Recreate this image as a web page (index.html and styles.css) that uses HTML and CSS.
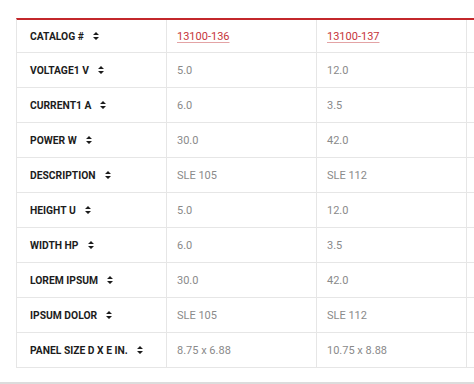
FILE: index.html
```html
<!DOCTYPE html>
<html>
<head>
<meta charset="utf-8">
<link rel="stylesheet" href="styles.css">
</head>
<body>
<div class="page">
  <div class="table">
    <div class="row head">
      <div class="cell label">CATALOG #<svg class="sort" viewBox="0 0 6 8"><path d="M3 0L6 3H0Z M3 8L6 5H0Z"/></svg></div>
      <div class="cell val"><a class="link">13100-136</a></div>
      <div class="cell val"><a class="link">13100-137</a></div>
      <div class="cell"></div>
    </div>
    <div class="row">
      <div class="cell label">VOLTAGE1 V<svg class="sort" viewBox="0 0 6 8"><path d="M3 0L6 3H0Z M3 8L6 5H0Z"/></svg></div>
      <div class="cell val">5.0</div>
      <div class="cell val">12.0</div>
      <div class="cell"></div>
    </div>
    <div class="row">
      <div class="cell label">CURRENT1 A<svg class="sort" viewBox="0 0 6 8"><path d="M3 0L6 3H0Z M3 8L6 5H0Z"/></svg></div>
      <div class="cell val">6.0</div>
      <div class="cell val">3.5</div>
      <div class="cell"></div>
    </div>
    <div class="row">
      <div class="cell label">POWER W<svg class="sort" viewBox="0 0 6 8"><path d="M3 0L6 3H0Z M3 8L6 5H0Z"/></svg></div>
      <div class="cell val">30.0</div>
      <div class="cell val">42.0</div>
      <div class="cell"></div>
    </div>
    <div class="row">
      <div class="cell label">DESCRIPTION<svg class="sort" viewBox="0 0 6 8"><path d="M3 0L6 3H0Z M3 8L6 5H0Z"/></svg></div>
      <div class="cell val">SLE 105</div>
      <div class="cell val">SLE 112</div>
      <div class="cell"></div>
    </div>
    <div class="row">
      <div class="cell label">HEIGHT U<svg class="sort" viewBox="0 0 6 8"><path d="M3 0L6 3H0Z M3 8L6 5H0Z"/></svg></div>
      <div class="cell val">5.0</div>
      <div class="cell val">12.0</div>
      <div class="cell"></div>
    </div>
    <div class="row">
      <div class="cell label">WIDTH HP<svg class="sort" viewBox="0 0 6 8"><path d="M3 0L6 3H0Z M3 8L6 5H0Z"/></svg></div>
      <div class="cell val">6.0</div>
      <div class="cell val">3.5</div>
      <div class="cell"></div>
    </div>
    <div class="row">
      <div class="cell label">LOREM IPSUM<svg class="sort" viewBox="0 0 6 8"><path d="M3 0L6 3H0Z M3 8L6 5H0Z"/></svg></div>
      <div class="cell val">30.0</div>
      <div class="cell val">42.0</div>
      <div class="cell"></div>
    </div>
    <div class="row">
      <div class="cell label">IPSUM DOLOR<svg class="sort" viewBox="0 0 6 8"><path d="M3 0L6 3H0Z M3 8L6 5H0Z"/></svg></div>
      <div class="cell val">SLE 105</div>
      <div class="cell val">SLE 112</div>
      <div class="cell"></div>
    </div>
    <div class="row">
      <div class="cell label">PANEL SIZE D X E IN.<svg class="sort" viewBox="0 0 6 8"><path d="M3 0L6 3H0Z M3 8L6 5H0Z"/></svg></div>
      <div class="cell val">8.75 x 6.88</div>
      <div class="cell val">10.75 x 8.88</div>
      <div class="cell"></div>
    </div>
  </div>
  <div class="bar"></div>
</div>
</body>
</html>
```

FILE: styles.css
```css
html, body {
  margin: 0;
  padding: 0;
  background: #fff;
}
body {
  width: 474px;
  height: 384px;
  overflow: hidden;
  font-family: Roboto, "Liberation Sans", sans-serif;
}
.page {
  display: flex;
  flex-direction: column;
  padding-top: 18px;
  height: 384px;
  box-sizing: border-box;
}
.table {
  margin-left: 16px;
  width: 458px;
  border-top: 2px solid #c3272b;
  border-left: 1px solid #e6e6e6;
  box-sizing: border-box;
}
.row {
  display: grid;
  grid-template-columns: 150px 150px 150px 1fr;
  height: 35px;
}
.row.head {
  height: 33px;
}
.cell {
  box-sizing: border-box;
  border-right: 1px solid #e6e6e6;
  border-bottom: 1px solid #e6e6e6;
  display: flex;
  align-items: center;
  min-width: 0;
}
.cell:last-child {
  border-right: none;
}
.label {
  padding-left: 13px;
  font-size: 10.3px;
  font-weight: 700;
  color: #1c1c1c;
  white-space: nowrap;
}
.sort {
  width: 6px;
  height: 8px;
  margin-left: 9px;
  fill: #1c1c1c;
  flex: none;
}
.val {
  padding-left: 10px;
  font-size: 11px;
  color: #8a8a8a;
}
.link {
  color: #c6353a;
  text-decoration: underline;
  text-decoration-color: #e3a3a5;
  text-underline-offset: 2px;
}
.bar {
  margin-top: auto;
  height: 2px;
  background: #dcdcdc;
}
```
